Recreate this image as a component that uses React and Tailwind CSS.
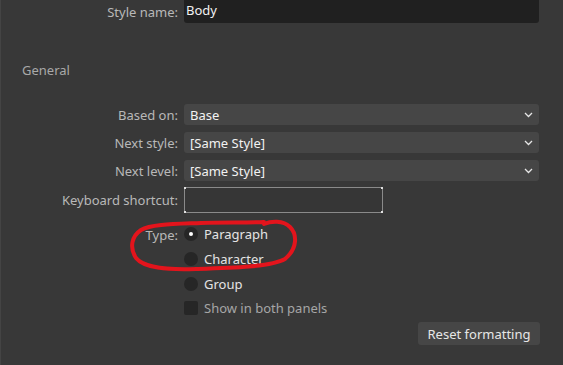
import React from 'react';

const font = { fontFamily: '"Noto Sans", "Open Sans", sans-serif' };

function Chevron() {
  return (
    <svg width="9" height="6" viewBox="0 0 9 6" className="shrink-0">
      <path d="M1 1 L4.5 4.5 L8 1" fill="none" stroke="#e6e6e6" strokeWidth="1.3" />
    </svg>
  );
}

function Row({ label, children, className = '' }) {
  return (
    <div className={`grid grid-cols-[177px_355px] gap-x-[6px] ${className}`}>
      <div className="flex items-center justify-end text-[#b8b8b8]">{label}</div>
      {children}
    </div>
  );
}

function Select({ value }) {
  return (
    <div className="flex items-center justify-between h-[21px] rounded-[3px] bg-[#464646] pl-[6px] pr-[6px] text-[#f2f2f2]">
      <span>{value}</span>
      <Chevron />
    </div>
  );
}

function Radio({ checked, label }) {
  return (
    <div className="flex items-center gap-[6px] h-[14px]">
      <div className="w-[14px] h-[14px] rounded-full bg-[#262626] flex items-center justify-center">
        {checked && <div className="w-[4px] h-[4px] rounded-full bg-white" />}
      </div>
      <span className="text-[#e4e4e4] -mt-px">{label}</span>
    </div>
  );
}

export default function App() {
  return (
    <div
      className="relative w-[563px] h-[365px] overflow-hidden bg-[#383838] border-l border-[#444444] text-[13px] leading-[16px]"
      style={font}
    >
      <div className="flex flex-col">
        <Row label={<span className="pt-[3px]">Style name:</span>} className="mt-[-3px] h-[26px]">
          <div className="h-[26px] rounded-[3px] bg-[#202020] pl-[2px] flex items-center text-[#f2f2f2]">
            <span className="-mt-[1px]">Body</span>
          </div>
        </Row>

        <div className="mt-[39px] h-[16px] pl-[21px] text-[#a9a9a9]">General</div>

        <Row label="Based on:" className="mt-[26px] h-[21px]">
          <Select value="Base" />
        </Row>
        <Row label="Next style:" className="mt-[7px] h-[21px]">
          <Select value="[Same Style]" />
        </Row>
        <Row label="Next level:" className="mt-[7px] h-[21px]">
          <Select value="[Same Style]" />
        </Row>
        <Row label="Keyboard shortcut:" className="mt-[6px] h-[26px]">
          <div className="relative w-[199px] h-[26px] border border-[#8a8a8a] bg-[#363636]">
            <span className="absolute -left-px -top-px w-[2px] h-[2px] bg-[#e0e0e0]" />
            <span className="absolute -right-px -top-px w-[2px] h-[2px] bg-[#e0e0e0]" />
            <span className="absolute -left-px -bottom-px w-[2px] h-[2px] bg-[#e0e0e0]" />
            <span className="absolute -right-px -bottom-px w-[2px] h-[2px] bg-[#e0e0e0]" />
          </div>
        </Row>

        <Row label="Type:" className="mt-[14px] h-[14px]">
          <Radio checked label="Paragraph" />
        </Row>
        <Row label="" className="mt-[11px] h-[14px]">
          <Radio label="Character" />
        </Row>
        <Row label="" className="mt-[11px] h-[14px]">
          <Radio label="Group" />
        </Row>
        <Row label="" className="mt-[10px] h-[14px]">
          <div className="flex items-center gap-[6px] h-[14px]">
            <div className="w-[14px] h-[14px] rounded-[2px] bg-[#262626]" />
            <span className="text-[#a6a6a6] -mt-px">Show in both panels</span>
          </div>
        </Row>

        <div className="mt-[7px] flex justify-end pr-[23px]">
          <button className="h-[23px] w-[122px] rounded-[3px] bg-[#464646] text-[#e6e6e6] flex items-center justify-center">
            Reset formatting
          </button>
        </div>
      </div>

      <svg className="absolute left-0 top-0 pointer-events-none" width="563" height="365" viewBox="0 0 563 365">
        <path
          d="M263 224 C270 221 282 220 289 227 C296 234 297 248 284 259 C270 267 230 268 195 269 C165 270 143 268 135 258 C128 247 131 236 140 230 C150 224 175 224 200 223 C225 222 245 223 263 222"
          fill="none"
          stroke="#e3141c"
          strokeWidth="4"
          strokeLinecap="round"
        />
      </svg>
    </div>
  );
}
